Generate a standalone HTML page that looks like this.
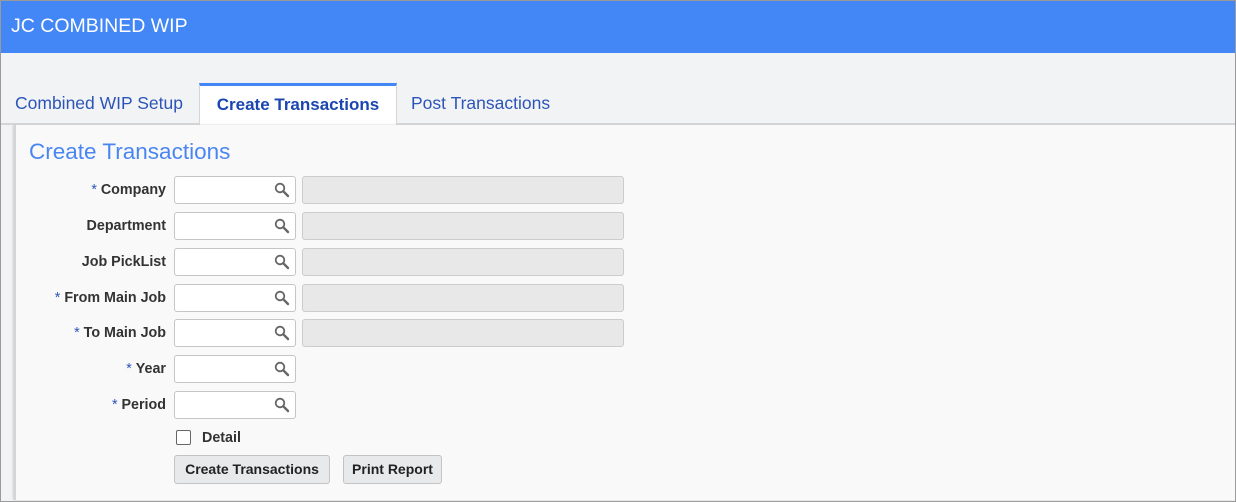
<!DOCTYPE html>
<html><head><style>
*{box-sizing:border-box;margin:0;padding:0}
body{width:1236px;height:502px;font-family:"Liberation Sans",Arial,sans-serif;background:#fff;position:relative;overflow:hidden}
.frame{position:absolute;left:0;top:0;width:1236px;height:502px;border:1px solid #9a9a9a;background:#f2f3f5}
.hdr{position:absolute;left:0;top:0;width:1234px;height:52px;background:#4287f5;color:#fff;font-size:19.5px;line-height:50px;padding-left:10px}
.tabline{position:absolute;left:0;top:122px;width:1234px;height:2px;background:#d3d5d8}
.tab{position:absolute;top:92px;font-size:17.5px;color:#2d55b7}
.atab{position:absolute;left:198px;top:82px;width:198px;height:42px;background:#fff;border-top:3px solid #4287f5;border-left:1px solid #d3d5d8;border-right:1px solid #d3d5d8;font-weight:bold;color:#1b46b0;font-size:17px;text-align:center;line-height:38px}
.panel{position:absolute;left:13px;top:124px;width:1221px;height:375px;background:#f9f9fa;border-left:2px solid #d5d5d5;box-shadow:-1px 0 2px #ccc}
.title{position:absolute;left:28px;top:138px;font-size:22.5px;color:#4a86f0}
.lbl{position:absolute;right:1070px;font-size:14.3px;font-weight:bold;color:#333;text-align:right}
.lbl b{color:#2d55b7;font-weight:normal}
.inp{position:absolute;left:174px;width:122px;height:28px;background:#fff;border:1px solid #c5c5c5;border-radius:3px}
.inp svg{position:absolute;right:5px;top:5px}
.gry{position:absolute;left:302px;width:322px;height:28px;background:#e8e8e8;border:1px solid #ccc;border-radius:3px}
.btn{position:absolute;top:455px;height:29px;background:#e8e9eb;border:1px solid #c3c3c3;border-radius:3px;font-size:14px;font-weight:bold;color:#222;line-height:27px;text-align:center}
</style></head><body>
<div class="frame">
<div class="hdr">JC COMBINED WIP</div>
<div class="tabline"></div>
<div class="tab" style="left:14px">Combined WIP Setup</div>
<div class="atab">Create Transactions</div>
<div class="tab" style="left:410px">Post Transactions</div>
<div class="panel"></div>
<div class="title">Create Transactions</div>
</div>
<div class="lbl" style="top:182px"><b>* </b>Company</div>
<div class="lbl" style="top:218px">Department</div>
<div class="lbl" style="top:254px">Job PickList</div>
<div class="lbl" style="top:290px"><b>* </b>From Main Job</div>
<div class="lbl" style="top:325px"><b>* </b>To Main Job</div>
<div class="lbl" style="top:361px"><b>* </b>Year</div>
<div class="lbl" style="top:397px"><b>* </b>Period</div>
<div class="inp" style="top:176px"><svg width="16" height="16" viewBox="0 0 16 16"><circle cx="6" cy="6" r="4.3" fill="none" stroke="#666" stroke-width="1.8"/><path d="M9.2 9.2 14 14" stroke="#666" stroke-width="2.4" stroke-linecap="round"/></svg></div>
<div class="inp" style="top:212px"><svg width="16" height="16" viewBox="0 0 16 16"><circle cx="6" cy="6" r="4.3" fill="none" stroke="#666" stroke-width="1.8"/><path d="M9.2 9.2 14 14" stroke="#666" stroke-width="2.4" stroke-linecap="round"/></svg></div>
<div class="inp" style="top:248px"><svg width="16" height="16" viewBox="0 0 16 16"><circle cx="6" cy="6" r="4.3" fill="none" stroke="#666" stroke-width="1.8"/><path d="M9.2 9.2 14 14" stroke="#666" stroke-width="2.4" stroke-linecap="round"/></svg></div>
<div class="inp" style="top:284px"><svg width="16" height="16" viewBox="0 0 16 16"><circle cx="6" cy="6" r="4.3" fill="none" stroke="#666" stroke-width="1.8"/><path d="M9.2 9.2 14 14" stroke="#666" stroke-width="2.4" stroke-linecap="round"/></svg></div>
<div class="inp" style="top:319px"><svg width="16" height="16" viewBox="0 0 16 16"><circle cx="6" cy="6" r="4.3" fill="none" stroke="#666" stroke-width="1.8"/><path d="M9.2 9.2 14 14" stroke="#666" stroke-width="2.4" stroke-linecap="round"/></svg></div>
<div class="inp" style="top:355px"><svg width="16" height="16" viewBox="0 0 16 16"><circle cx="6" cy="6" r="4.3" fill="none" stroke="#666" stroke-width="1.8"/><path d="M9.2 9.2 14 14" stroke="#666" stroke-width="2.4" stroke-linecap="round"/></svg></div>
<div class="inp" style="top:391px"><svg width="16" height="16" viewBox="0 0 16 16"><circle cx="6" cy="6" r="4.3" fill="none" stroke="#666" stroke-width="1.8"/><path d="M9.2 9.2 14 14" stroke="#666" stroke-width="2.4" stroke-linecap="round"/></svg></div>
<div class="gry" style="top:176px"></div>
<div class="gry" style="top:212px"></div>
<div class="gry" style="top:248px"></div>
<div class="gry" style="top:284px"></div>
<div class="gry" style="top:319px"></div>
<div style="position:absolute;left:176px;top:430px;width:15px;height:15px;border:1px solid #666;border-radius:2px;background:#fff"></div>
<div style="position:absolute;left:202px;top:430px;font-size:14.3px;font-weight:bold;color:#333">Detail</div>
<div class="btn" style="left:174px;width:156px">Create Transactions</div>
<div class="btn" style="left:343px;width:99px">Print Report</div>
</body></html>
